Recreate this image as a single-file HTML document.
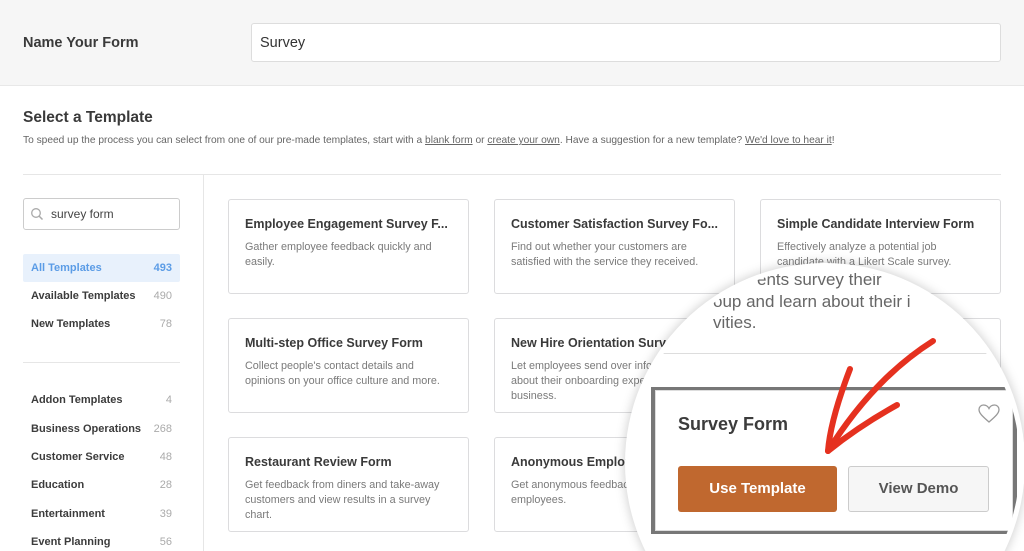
<!DOCTYPE html>
<html style="width:1024px;height:551px;overflow:hidden"><head><meta charset="utf-8"><style>
*{box-sizing:border-box;margin:0;padding:0}
body{width:1024px;height:551px;overflow:hidden;background:#fff;font-family:"Liberation Sans",sans-serif;color:#3c434a}
#w{position:relative;width:1024px;height:551px;overflow:hidden}
.a{position:absolute;white-space:nowrap}
.hdr{left:0;top:0;width:1024px;height:86px;background:#f6f6f6;border-bottom:1px solid #e8e8e8}
.card{position:absolute;width:241px;height:95px;border:1px solid #dcdcde;border-radius:3px;background:#fff}
.card b{position:absolute;left:16px;top:17px;font-size:12.5px;color:#3a3a3a;white-space:nowrap}
.card p{position:absolute;left:16px;top:40px;font-size:10.8px;line-height:15px;color:#7a7a7a;width:205px}
.nav{position:absolute;left:31px;font-size:11px;font-weight:bold;color:#3c3c3c}
.cnt{position:absolute;right:852px;font-size:11px;color:#aaa}
</style></head><body><div id="w">
<div class="a hdr"></div>
<div class="a" style="left:23px;top:35px;font-size:14.5px;font-weight:bold;color:#3a3a3a">Name Your Form</div>
<div class="a" style="left:251px;top:23px;width:750px;height:39px;background:#fff;border:1px solid #ddd;border-radius:3px"></div>
<div class="a" style="left:260px;top:35px;font-size:14.5px;color:#333">Survey</div>
<div class="a" style="left:23px;top:109px;font-size:15.5px;font-weight:bold;color:#3a3a3a">Select a Template</div>
<div class="a" style="left:23px;top:135px;font-size:10.2px;color:#666">To speed up the process you can select from one of our pre-made templates, start with a <u>blank form</u> or <u>create your own</u>. Have a suggestion for a new template? <u>We'd love to hear it</u>!</div>
<div class="a" style="left:23px;top:174px;width:978px;height:1px;background:#e6e6e6"></div>
<div class="a" style="left:203px;top:175px;width:1px;height:376px;background:#e6e6e6"></div>
<div class="a" style="left:23px;top:198px;width:157px;height:32px;border:1px solid #ccc;border-radius:3px"></div>
<svg class="a" style="left:30px;top:207px" width="14" height="14"><circle cx="6" cy="6" r="4.3" fill="none" stroke="#aaa" stroke-width="1.3"/><path d="M9 9l3.5 3.5" stroke="#aaa" stroke-width="1.5"/></svg>
<div class="a" style="left:51px;top:207px;font-size:12px;color:#444">survey form</div>
<div class="a" style="left:23px;top:254px;width:157px;height:28px;background:#e8f1fc;border-radius:2px"></div>
<div class="nav" style="top:262px;color:#5b9ce6">All Templates</div><div class="cnt" style="top:262px;color:#5b9ce6;font-weight:bold">493</div>
<div class="nav" style="top:290px">Available Templates</div><div class="cnt" style="top:290px">490</div>
<div class="nav" style="top:318px">New Templates</div><div class="cnt" style="top:318px">78</div>
<div class="a" style="left:23px;top:362px;width:157px;height:1px;background:#e6e6e6"></div>
<div class="nav" style="top:394px">Addon Templates</div><div class="cnt" style="top:394px">4</div>
<div class="nav" style="top:423px">Business Operations</div><div class="cnt" style="top:423px">268</div>
<div class="nav" style="top:451px">Customer Service</div><div class="cnt" style="top:451px">48</div>
<div class="nav" style="top:479px">Education</div><div class="cnt" style="top:479px">28</div>
<div class="nav" style="top:508px">Entertainment</div><div class="cnt" style="top:508px">39</div>
<div class="nav" style="top:536px">Event Planning</div><div class="cnt" style="top:536px">56</div>

<div class="card" style="left:228px;top:199px"><b>Employee Engagement Survey F...</b><p>Gather employee feedback quickly and easily.</p></div>
<div class="card" style="left:494px;top:199px"><b>Customer Satisfaction Survey Fo...</b><p>Find out whether your customers are satisfied with the service they received.</p></div>
<div class="card" style="left:760px;top:199px"><b>Simple Candidate Interview Form</b><p style="width:195px">Effectively analyze a potential job candidate with a Likert Scale survey.</p></div>
<div class="card" style="left:228px;top:318px"><b>Multi-step Office Survey Form</b><p style="width:200px">Collect people's contact details and opinions on your office culture and more.</p></div>
<div class="card" style="left:494px;top:318px"><b>New Hire Orientation Survey Form</b><p>Let employees send over information about their onboarding experience at your business.</p></div>
<div class="card" style="left:760px;top:318px"></div>
<div class="card" style="left:228px;top:437px"><b>Restaurant Review Form</b><p>Get feedback from diners and take-away customers and view results in a survey chart.</p></div>
<div class="card" style="left:494px;top:437px"><b>Anonymous Employee Survey</b><p>Get anonymous feedback from your employees.</p></div>

<svg class="a" style="left:0;top:0" width="1024" height="551"><defs><filter id="b" x="-20%" y="-20%" width="140%" height="140%"><feGaussianBlur stdDeviation="5"/></filter></defs><circle cx="825" cy="463" r="201" fill="rgba(0,0,0,.18)" filter="url(#b)"/><circle cx="825" cy="463" r="200" fill="#fff"/></svg>
<div class="a" style="left:0;top:0;width:1024px;height:551px;clip-path:circle(195px at 825px 463px);background:#fff">
  <div class="a" style="left:757px;top:270px;font-size:17px;color:#666">ents survey their</div>
  <div class="a" style="left:713px;top:292px;font-size:17px;color:#666">oup and learn about their i</div>
  <div class="a" style="left:713px;top:313px;font-size:17px;color:#666">vities.</div>
  <div class="a" style="left:600px;top:250px;width:400px;height:104px;border-right:1px solid #ddd;border-bottom:1px solid #ddd;border-radius:0 0 3px 0"></div>
  <div class="a" style="left:651px;top:387px;width:366px;height:147px;border:3px solid #777;border-left-width:4px;border-right-width:4px;background:#fff"></div>
  <div class="a" style="left:655px;top:390px;width:358px;height:141px;border:1px solid #ddd"></div>
  <div class="a" style="left:678px;top:414px;font-size:18px;font-weight:bold;color:#3c3c3c">Survey Form</div>
  <svg class="a" style="left:977px;top:403px" width="24" height="22"><path d="M12 19C5 13 2 10 2 6.5 2 4 4 2 6.5 2 9 2 11 3.5 12 5.5 13 3.5 15 2 17.5 2 20 2 22 4 22 6.5 22 10 19 13 12 19Z" fill="none" stroke="#999" stroke-width="1.3"/></svg>
  <div class="a" style="left:678px;top:466px;width:159px;height:46px;background:#c0682f;border-radius:3px;color:#fff;font-size:15px;font-weight:bold;text-align:center;line-height:46px">Use Template</div>
  <div class="a" style="left:848px;top:466px;width:141px;height:46px;background:#f6f6f6;border:1px solid #ccc;border-radius:3px;color:#555;font-size:15px;font-weight:bold;text-align:center;line-height:44px">View Demo</div>
</div>
<svg class="a" style="left:0;top:0" width="1024" height="551"><g fill="none" stroke="#e5311f" stroke-width="6" stroke-linecap="round" stroke-linejoin="round"><path d="M933 341C895 365 860 400 828 451"/><path d="M850 369C840 395 830 425 828 451"/><path d="M897 405C870 420 848 435 828 451"/></g></svg>
</div></body></html>
